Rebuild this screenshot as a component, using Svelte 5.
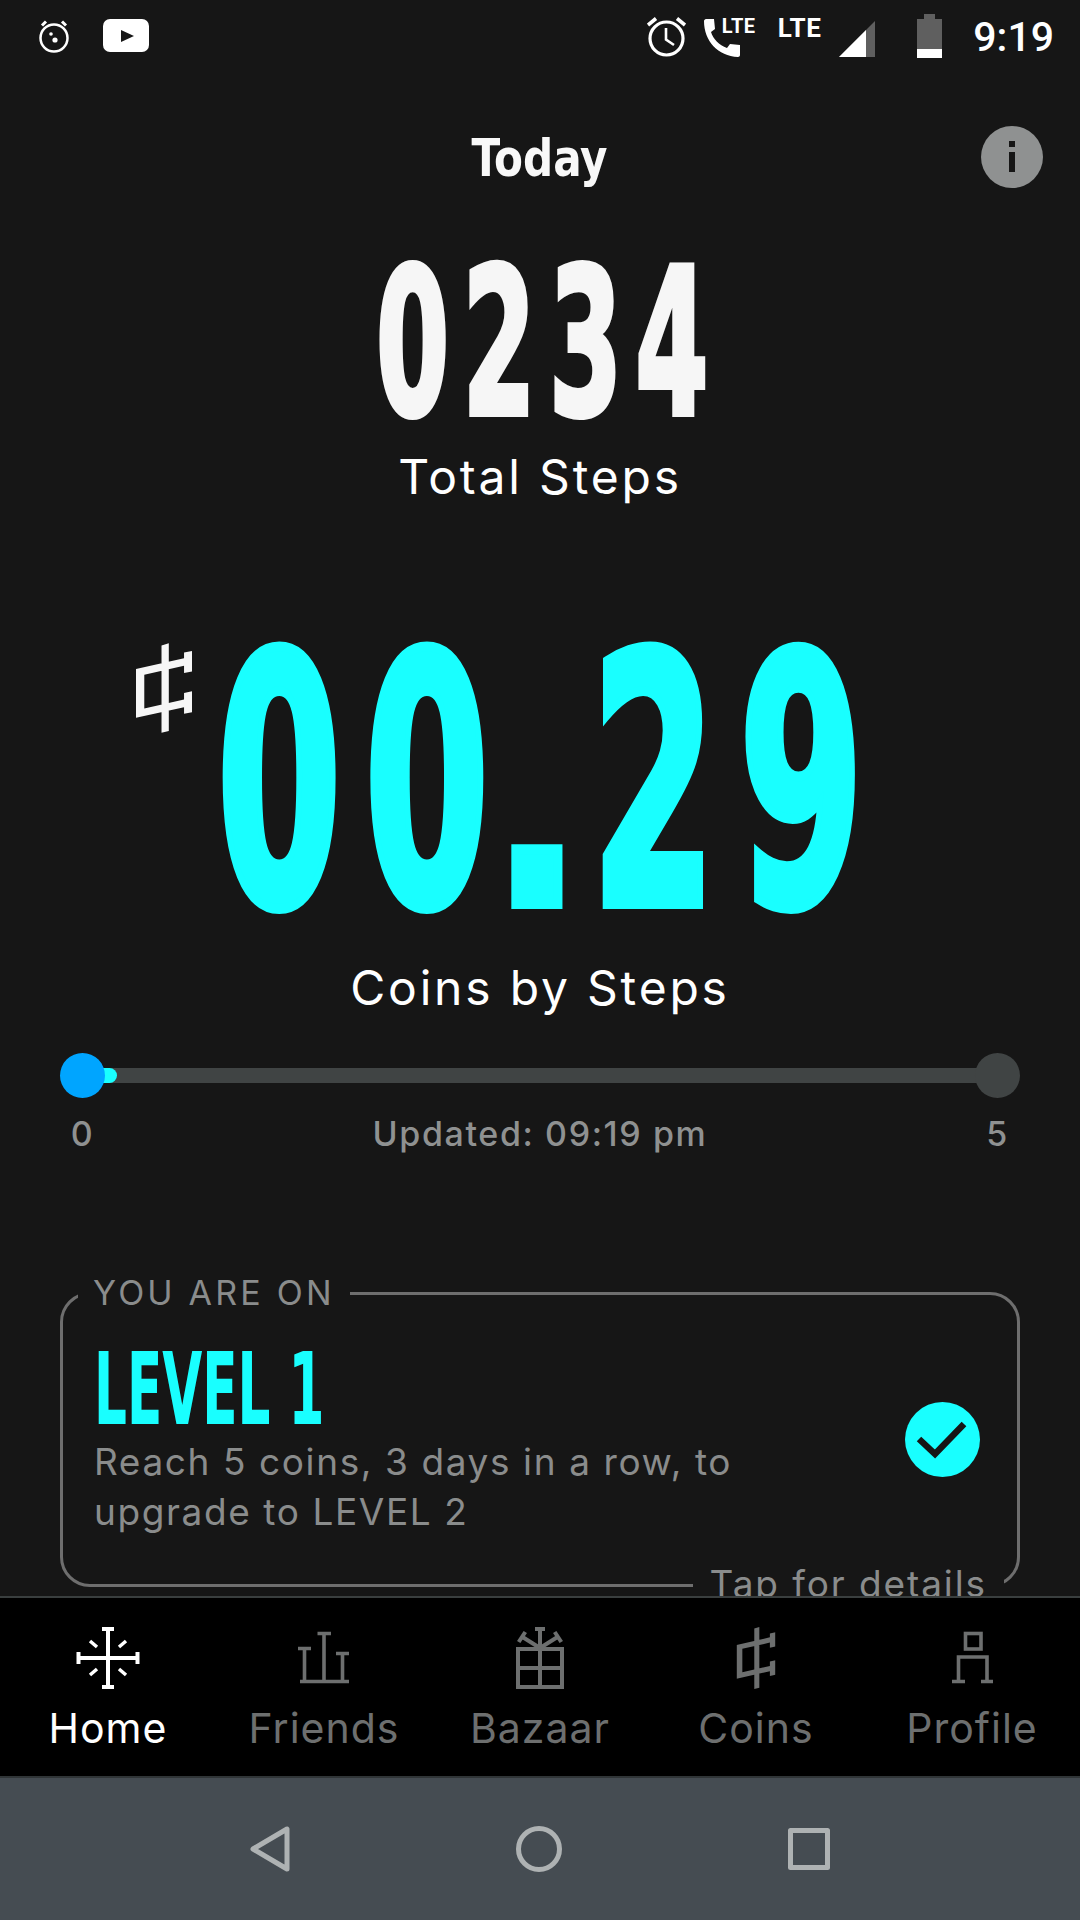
<script>
  const coinPath = 'M185 72L207 65V330L185 335ZM108 143L253 110V93L277 88V150L253 155V133L133 160V262L253 235V215L277 210V273L253 278V258L108 290Z';

  const tabs = [
    { label: 'Home', icon: 'home', active: true },
    { label: 'Friends', icon: 'friends' },
    { label: 'Bazaar', icon: 'bazaar' },
    { label: 'Coins', icon: 'coins' },
    { label: 'Profile', icon: 'profile' }
  ];
</script>

<div class="screen">
  <!-- status bar -->
  <div class="status">
    <div class="status-left">
      <svg class="alarm-small" width="34" height="34" viewBox="0 0 34 34" fill="none" stroke="#fff" stroke-width="2.5">
        <circle cx="17" cy="19" r="13.5" />
        <path d="M5 6.5L9 2.5M29 6.5L25 2.5" stroke-width="3" />
        <circle cx="14" cy="15" r="1.8" fill="#fff" stroke="none" />
        <circle cx="18" cy="21" r="2.6" fill="#fff" stroke="none" />
      </svg>
      <svg width="46" height="33" viewBox="0 0 46 33">
        <rect width="46" height="33" rx="7" fill="#fff" />
        <path d="M18 11L31 17L18 23Z" fill="#161616" />
      </svg>
    </div>
    <div class="status-right">
      <svg class="s-alarm" width="39" height="41" viewBox="0 0 39 41" fill="none" stroke="#fff" stroke-width="3.2">
        <circle cx="19.5" cy="22.5" r="16.5" />
        <path d="M19 12V23.5L27 29" stroke-width="2.6" />
        <path d="M1 9L9 2.5M38 9L30 2.5" stroke-width="3.6" />
      </svg>
      <div class="call">
        <svg width="37" height="38" viewBox="0 0 37 38">
          <path d="M1 2C1 1 2 0 3 0H11L12 10L8 13C10 20 16 26 24 29L27 25L37 26V36C37 37 36 38 35 38C15 37 1 22 1 2Z" fill="#fff" />
        </svg>
        <span class="lte-small">LTE</span>
      </div>
      <span class="lte">LTE</span>
      <svg class="signal" width="36" height="36" viewBox="0 0 36 36">
        <path d="M36 0V36H0Z" fill="#5f5f5f" />
        <path d="M27 9V36H0Z" fill="#fff" />
      </svg>
      <svg class="battery" width="25" height="44" viewBox="0 0 25 44">
        <path d="M7 0H18V5H25V35H0V5H7Z" fill="#5f5f5f" />
        <rect y="35" width="25" height="9" fill="#fff" />
      </svg>
      <span class="time">9:19</span>
    </div>
  </div>

  <main class="content">
    <div class="head">
      <span></span>
      <h1>Today</h1>
      <div class="info"><span class="i-dot"></span><span class="i-bar"></span></div>
    </div>

    <div class="steps">0234</div>
    <div class="caption steps-cap">Total Steps</div>

    <div class="coins-row">
      <svg class="coin" width="56" height="90" viewBox="108 65 169 270"><path d={coinPath} fill="#f6f6f6" /></svg>
      <div class="coins-val">00<span class="dot">.</span>29</div>
    </div>
    <div class="caption coins-cap">Coins by Steps</div>

    <div class="slider">
      <span class="knob on"></span>
      <div class="track"><span class="fill"></span></div>
      <span class="knob"></span>
    </div>
    <div class="slider-labels">
      <span>0</span>
      <span class="updated">Updated: 09:19 pm</span>
      <span>5</span>
    </div>

    <div class="card">
      <span class="legend">YOU ARE ON</span>
      <div class="card-text">
        <div class="level">LEVEL 1</div>
        <p>Reach 5 coins, 3 days in a row, to<br />upgrade to LEVEL 2</p>
      </div>
      <svg class="check" width="75" height="75" viewBox="0 0 75 75">
        <circle cx="37.5" cy="37.5" r="37.5" fill="#19ffff" />
        <path d="M14 37L30 52L59 22" fill="none" stroke="#161616" stroke-width="6.5" />
      </svg>
      <span class="tap">Tap for details</span>
    </div>
  </main>

  <nav class="tabs">
    {#each tabs as tab}
      <div class="tab" class:active={tab.active}>
        <svg width="64" height="62" viewBox="0 0 64 62" fill="none" stroke="currentColor" stroke-width="4">
          {#if tab.icon === 'home'}
            <path d="M32 1V61M26 2H38M26 60H38M1 31H63M2.5 25V37M61.5 25V37" />
            <path d="M14 14L21 20M50 14L43 20M14 48L21 42M50 48L43 42" stroke-width="3.5" />
          {:else if tab.icon === 'friends'}
            <path d="M32 6V54M25.5 6.5H39M12.5 21V54M6 21.5H19M50.5 26V54M44 26.5H57M8 54.5H57" stroke-width="3.6" />
          {:else if tab.icon === 'bazaar'}
            <rect x="10" y="22" width="44" height="38" />
            <path d="M32 2V60M10 41H54M27 2H37M32 21L14.5 10M32 21L49.5 10M10.7 15L17.3 5M53.3 15L46.7 5" />
          {:else if tab.icon === 'coins'}
            <svg x="12.5" y="0" width="39" height="62" viewBox="108 65 169 270"><path d={coinPath} fill="currentColor" stroke="none" /></svg>
          {:else if tab.icon === 'profile'}
            <rect x="25.5" y="6.5" width="15.5" height="15.5" stroke-width="3.6" />
            <path d="M18.5 54V30H47V54M12 54.5H25M41 54.5H53" stroke-width="3.6" />
          {/if}
        </svg>
        <span>{tab.label}</span>
      </div>
    {/each}
  </nav>

  <!-- android buttons -->
  <div class="android">
    <svg width="40" height="46" viewBox="0 0 40 46" fill="none" stroke="#aeb2b3" stroke-width="5" stroke-linejoin="round">
      <path d="M37 3V43L3 23Z" />
    </svg>
    <svg width="46" height="46" viewBox="0 0 46 46" fill="none" stroke="#aeb2b3" stroke-width="5">
      <circle cx="23" cy="23" r="20.5" />
    </svg>
    <svg width="42" height="42" viewBox="0 0 42 42" fill="none" stroke="#aeb2b3" stroke-width="5" stroke-linejoin="round">
      <rect x="2.5" y="2.5" width="37" height="37" />
    </svg>
  </div>
</div>

<style>
  :global(body) {
    margin: 0;
    background: #161616;
  }

  .screen {
    width: 1080px;
    height: 1920px;
    display: flex;
    flex-direction: column;
    background: #161616;
    color: #fff;
    font-family: Inter, "Liberation Sans", sans-serif;
    overflow: hidden;
  }

  /* status bar */
  .status {
    height: 65px;
    flex: none;
    display: flex;
    justify-content: space-between;
    padding: 0 26px 0 37px;
  }

  .status-left {
    display: flex;
    gap: 32px;
    padding-top: 19px;
    align-items: flex-start;
  }

  .status-right {
    display: flex;
    align-items: flex-start;
  }

  .s-alarm { margin-top: 16px; }

  .call {
    position: relative;
    margin: 19px 0 0 17px;
    width: 37px;
  }

  .lte-small {
    position: absolute;
    left: 19px;
    top: -5px;
    font: 700 20px/24px Roboto, sans-serif;
    letter-spacing: 0.5px;
  }

  .lte {
    margin: 14px 0 0 38px;
    font: 700 26px/28px Roboto, sans-serif;
    letter-spacing: 0.5px;
  }

  .signal { margin: 21px 0 0 18px; }
  .battery { margin: 14px 0 0 42px; }

  .time {
    margin: 13px 0 0 31px;
    font: 500 41px/48px Roboto, sans-serif;
  }

  .content {
    flex: 1;
    min-height: 0;
    overflow: hidden;
  }

  .head {
    display: grid;
    grid-template-columns: 1fr auto 1fr;
    grid-template-rows: 63px;
    align-items: center;
    height: 63px;
    margin-top: 60px;
    padding: 0 37px;
  }

  h1 {
    align-self: start;
    margin: 2px 0 0;
    font: 700 52px/63px "DejaVu Sans Condensed", sans-serif;
    transform: scaleX(0.9);
    color: #f8f8f8;
  }

  .info {
    justify-self: end;
    width: 62px;
    height: 62px;
    border-radius: 50%;
    background: #8f9191;
    display: flex;
    flex-direction: column;
    align-items: center;
    padding-top: 15px;
    box-sizing: border-box;
    gap: 5px;
  }

  .i-dot { width: 6px; height: 6px; background: #161616; }
  .i-bar { width: 6px; height: 20px; background: #161616; }

  .steps {
    margin-top: 78px;
    padding-left: 32px;
    text-align: center;
    font: 700 203px/157px "DejaVu Sans Condensed", sans-serif;
    letter-spacing: 24px;
    color: #f6f6f6;
    -webkit-text-stroke: 6px #f6f6f6;
    transform: scaleX(0.572);
  }

  .caption {
    text-align: center;
    font-size: 48px;
    line-height: 50px;
    letter-spacing: 2.8px;
  }

  .steps-cap { margin-top: 29px; }

  .coins-row {
    margin-top: 141px;
    height: 272px;
    display: flex;
    align-items: flex-start;
    padding-left: 136px;
  }

  .coin { flex: none; }

  .coins-val {
    flex: none;
    margin-left: 25px;
    padding-top: 5px;
    font: 700 347px/272px "DejaVu Sans Condensed", sans-serif;
    letter-spacing: 41px;
    color: #19ffff;
    -webkit-text-stroke: 10px #19ffff;
    white-space: nowrap;
    transform: scaleX(0.572);
    transform-origin: left center;
  }

  .dot {
    display: inline-block;
    font-size: 290px;
    transform: scaleX(1.6);
    margin: 0 -8px 0 6px;
  }

  .coins-cap { margin-top: 48px; }

  .slider {
    margin: 40px 60px 0;
    height: 45px;
    display: flex;
    align-items: center;
  }

  .knob {
    flex: none;
    width: 45px;
    height: 45px;
    border-radius: 50%;
    background: #404444;
  }

  .knob.on {
    background: #00a5ff;
    position: relative;
  }

  .track {
    flex: 1;
    height: 15px;
    margin: 0 -2px;
    background: #404444;
  }

  .fill {
    display: block;
    width: 14px;
    height: 15px;
    border-radius: 0 8px 8px 0;
    background: #19ffff;
  }

  .slider-labels {
    margin: 16px 60px 0;
    display: flex;
    justify-content: space-between;
    font-size: 34px;
    font-weight: 500;
    line-height: 40px;
    color: #8f9191;
    letter-spacing: 1.6px;
  }

  .slider-labels span {
    width: 45px;
    text-align: center;
    flex: none;
  }

  .slider-labels .updated { width: auto; }

  .card {
    position: relative;
    box-sizing: border-box;
    margin: 138px 60px 0;
    height: 295px;
    border: 3px solid #6e6e6e;
    border-radius: 30px;
    display: flex;
    align-items: center;
    justify-content: space-between;
    padding: 0 37px 0 31px;
  }

  .legend,
  .tap {
    position: absolute;
    background: #161616;
    color: #8a8c8c;
    line-height: 40px;
    white-space: nowrap;
  }

  .legend {
    left: 15px;
    top: -22px;
    padding: 0 15px;
    font-size: 34px;
    letter-spacing: 3.2px;
  }

  .tap {
    right: 13px;
    bottom: -20px;
    padding: 0 17px;
    font-size: 37px;
    letter-spacing: 1.9px;
  }

  .card-text {
    align-self: flex-start;
    padding-top: 59px;
  }

  .level {
    font: 700 99px/72px "DejaVu Sans Condensed", sans-serif;
    color: #19ffff;
    transform: scaleX(0.58);
    transform-origin: left center;
    white-space: nowrap;
  }

  .card-text p {
    margin: 11px 0 0;
    font-size: 37px;
    line-height: 50px;
    letter-spacing: 1.6px;
    color: #8a8c8c;
  }

  /* bottom tabs */
  .tabs {
    flex: none;
    height: 182px;
    box-sizing: border-box;
    display: grid;
    grid-template-columns: repeat(5, 1fr);
    background: #000;
    border-top: 2px solid #3a3f3f;
    border-bottom: 2px solid #303537;
    color: #6d6f6f;
  }

  .tab {
    display: flex;
    flex-direction: column;
    align-items: center;
    padding-top: 29px;
  }

  .tab.active { color: #fff; }

  .tab span {
    margin-top: 14px;
    font-size: 41px;
    line-height: 50px;
    letter-spacing: 1px;
  }

  .android {
    flex: none;
    height: 142px;
    background: #454c52;
    display: grid;
    grid-template-columns: repeat(3, 1fr);
    justify-items: center;
    align-items: center;
    padding: 0 136px 0 135px;
  }
</style>
